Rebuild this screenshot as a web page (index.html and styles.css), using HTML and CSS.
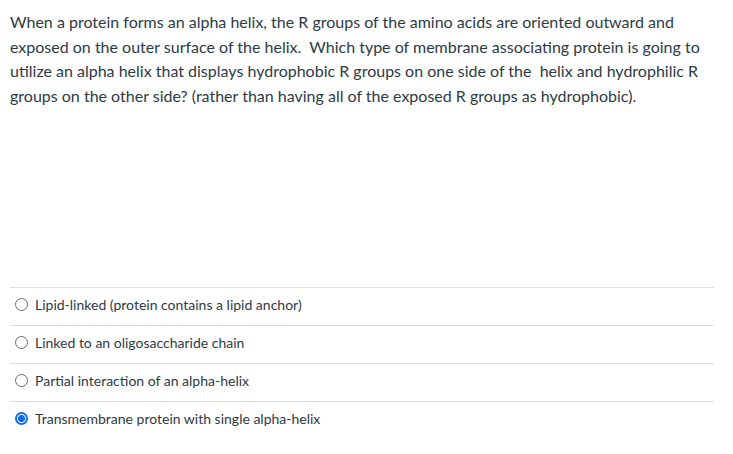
FILE: index.html
```html
<!DOCTYPE html>
<html>
<head>
<meta charset="utf-8">
<link rel="stylesheet" href="styles.css">
</head>
<body>
<div class="quiz">
  <div class="question">When a protein forms an alpha helix, the R groups of the amino acids are oriented outward and exposed on the outer surface of the helix.&nbsp; Which type of membrane associating protein is going to utilize an alpha helix that displays hydrophobic R groups on one side of the&nbsp; helix and hydrophilic R groups on the other side? (rather than having all of the exposed R groups as hydrophobic).</div>
  <div class="answers">
    <div class="answer"><span class="radio"></span><span class="label">Lipid-linked (protein contains a lipid anchor)</span></div>
    <div class="answer"><span class="radio"></span><span class="label">Linked to an oligosaccharide chain</span></div>
    <div class="answer"><span class="radio"></span><span class="label">Partial interaction of an alpha-helix</span></div>
    <div class="answer"><span class="radio checked"></span><span class="label">Transmembrane protein with single alpha-helix</span></div>
  </div>
</div>
</body>
</html>
```
FILE: styles.css
```css
html, body {
  margin: 0;
  padding: 0;
  background: #fff;
}
body {
  font-family: Lato, "Open Sans", sans-serif;
  color: #2d3b45;
}
.quiz {
  padding: 10px 19px 0 10px;
}
.question {
  font-size: 16px;
  line-height: 24.5px;
  height: 277px;
}
.answers {
  display: flex;
  flex-direction: column;
}
.answer {
  display: flex;
  align-items: center;
  gap: 7px;
  border-top: 1px solid #dcdcdc;
  padding: 6px 0 10px 5px;
  font-size: 14px;
  line-height: 21px;
}
.radio {
  width: 11px;
  height: 11px;
  border: 1px solid #6b6b6b;
  border-radius: 50%;
  background: #fff;
  flex: none;
}
.radio.checked {
  border: 2px solid #0a6cf5;
  width: 9px;
  height: 9px;
  background: radial-gradient(circle, #0a6cf5 0 3.2px, #fff 3.8px);
}
```
